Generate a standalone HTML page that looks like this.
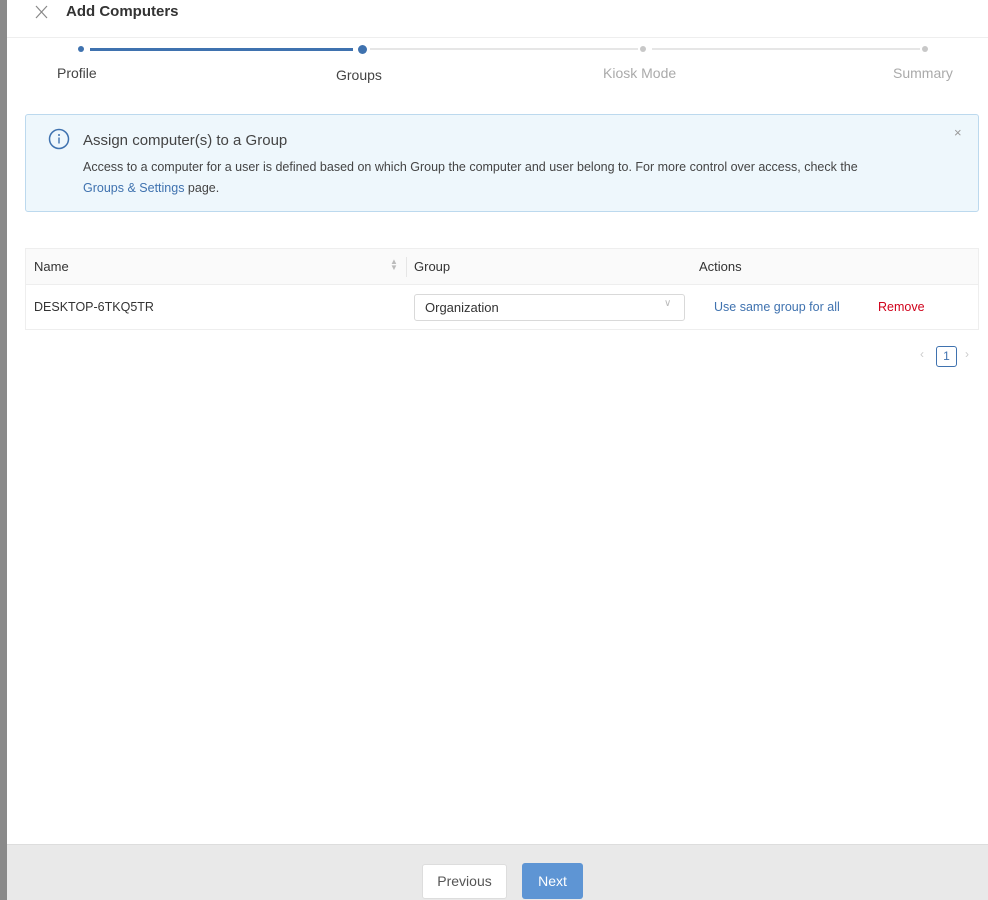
<!DOCTYPE html>
<html><head><style>
*{box-sizing:border-box;margin:0;padding:0}
body{width:988px;height:900px;overflow:hidden;background:#fff;font-family:"Liberation Sans",sans-serif;position:relative;color:#333}
.abs{position:absolute}
</style></head><body>
<div class="abs" style="left:0;top:0;width:7px;height:900px;background:#8a8a8a"></div>
<div class="abs" style="left:7px;top:37px;width:981px;height:1px;background:#eee"></div>
<svg class="abs" style="left:35px;top:5px" width="13" height="14"><path d="M1 1L12 13M12 1L1 13" stroke="#888" stroke-width="1.2"/></svg>
<div class="abs" style="left:66px;top:3px;font-size:15px;font-weight:bold;color:#333">Add Computers</div>
<div class="abs" style="left:90px;top:48px;width:263px;height:3px;background:#3f72af"></div>
<div class="abs" style="left:370px;top:48px;width:268px;height:2px;background:#e6e6e6"></div>
<div class="abs" style="left:652px;top:48px;width:268px;height:2px;background:#e6e6e6"></div>
<div class="abs" style="left:78px;top:46px;width:6px;height:6px;border-radius:50%;background:#3f72af"></div>
<div class="abs" style="left:358px;top:45px;width:9px;height:9px;border-radius:50%;background:#3f72af"></div>
<div class="abs" style="left:640px;top:46px;width:6px;height:6px;border-radius:50%;background:#c8c8c8"></div>
<div class="abs" style="left:922px;top:46px;width:6px;height:6px;border-radius:50%;background:#c8c8c8"></div>
<div class="abs" style="left:57px;top:65px;font-size:14px;color:#444">Profile</div>
<div class="abs" style="left:336px;top:67px;font-size:14px;color:#444">Groups</div>
<div class="abs" style="left:603px;top:65px;font-size:14px;color:#aaa">Kiosk Mode</div>
<div class="abs" style="left:893px;top:65px;font-size:14px;color:#aaa">Summary</div>
<div class="abs" style="left:25px;top:114px;width:954px;height:98px;background:#eef7fc;border:1px solid #bcd9ee;border-radius:3px"></div>
<svg class="abs" style="left:48px;top:128px" width="22" height="22"><circle cx="11" cy="11" r="9.5" fill="none" stroke="#3f72af" stroke-width="1.5"/><circle cx="11" cy="7" r="1" fill="#3f72af"/><rect x="10.3" y="9.5" width="1.4" height="6" fill="#3f72af"/></svg>
<div class="abs" style="left:83px;top:132px;font-size:15px;color:#444">Assign computer(s) to a Group</div>
<div class="abs" style="left:83px;top:157px;font-size:12.5px;color:#444;line-height:21px;width:880px;white-space:nowrap">Access to a computer for a user is defined based on which Group the computer and user belong to. For more control over access, check the<br><span style="color:#3f72af">Groups &amp; Settings</span> page.</div>
<div class="abs" style="left:954px;top:125px;font-size:13px;color:#999">×</div>
<div class="abs" style="left:25px;top:248px;width:954px;height:82px;border:1px solid #eee"></div>
<div class="abs" style="left:26px;top:249px;width:952px;height:36px;background:#fafafa;border-bottom:1px solid #eee"></div>
<div class="abs" style="left:406px;top:257px;width:1px;height:20px;background:#e6e6e6"></div>
<div class="abs" style="left:34px;top:259px;font-size:13px;color:#333">Name</div>
<div class="abs" style="left:390px;top:259px;font-size:8px;color:#bbb;line-height:6px">▲<br>▼</div>
<div class="abs" style="left:414px;top:259px;font-size:13px;color:#333">Group</div>
<div class="abs" style="left:699px;top:259px;font-size:13px;color:#333">Actions</div>
<div class="abs" style="left:34px;top:300px;font-size:12.5px;color:#333">DESKTOP-6TKQ5TR</div>
<div class="abs" style="left:414px;top:294px;width:271px;height:27px;border:1px solid #d9d9d9;border-radius:3px"></div>
<div class="abs" style="left:425px;top:300px;font-size:13px;color:#333">Organization</div>
<div class="abs" style="left:664px;top:298px;font-size:10px;color:#bbb">∨</div>
<div class="abs" style="left:714px;top:300px;font-size:12.5px;color:#3f72af">Use same group for all</div>
<div class="abs" style="left:878px;top:300px;font-size:12.5px;color:#d0021b">Remove</div>
<div class="abs" style="left:920px;top:347px;font-size:12px;color:#ccc">‹</div>
<div class="abs" style="left:936px;top:346px;width:21px;height:21px;border:1px solid #3f72af;border-radius:3px;font-size:12px;text-align:center;line-height:19px;color:#3f72af">1</div>
<div class="abs" style="left:965px;top:347px;font-size:12px;color:#ccc">›</div>
<div class="abs" style="left:7px;top:844px;width:981px;height:56px;background:#e9e9e9;border-top:1px solid #ddd"></div>
<div class="abs" style="left:422px;top:864px;width:85px;height:35px;background:#fff;border:1px solid #ddd;border-radius:3px;font-size:14px;color:#555;text-align:center;line-height:33px">Previous</div>
<div class="abs" style="left:522px;top:863px;width:61px;height:36px;background:#5e95d4;border-radius:3px;font-size:14px;color:#fff;text-align:center;line-height:36px">Next</div>
</body></html>
